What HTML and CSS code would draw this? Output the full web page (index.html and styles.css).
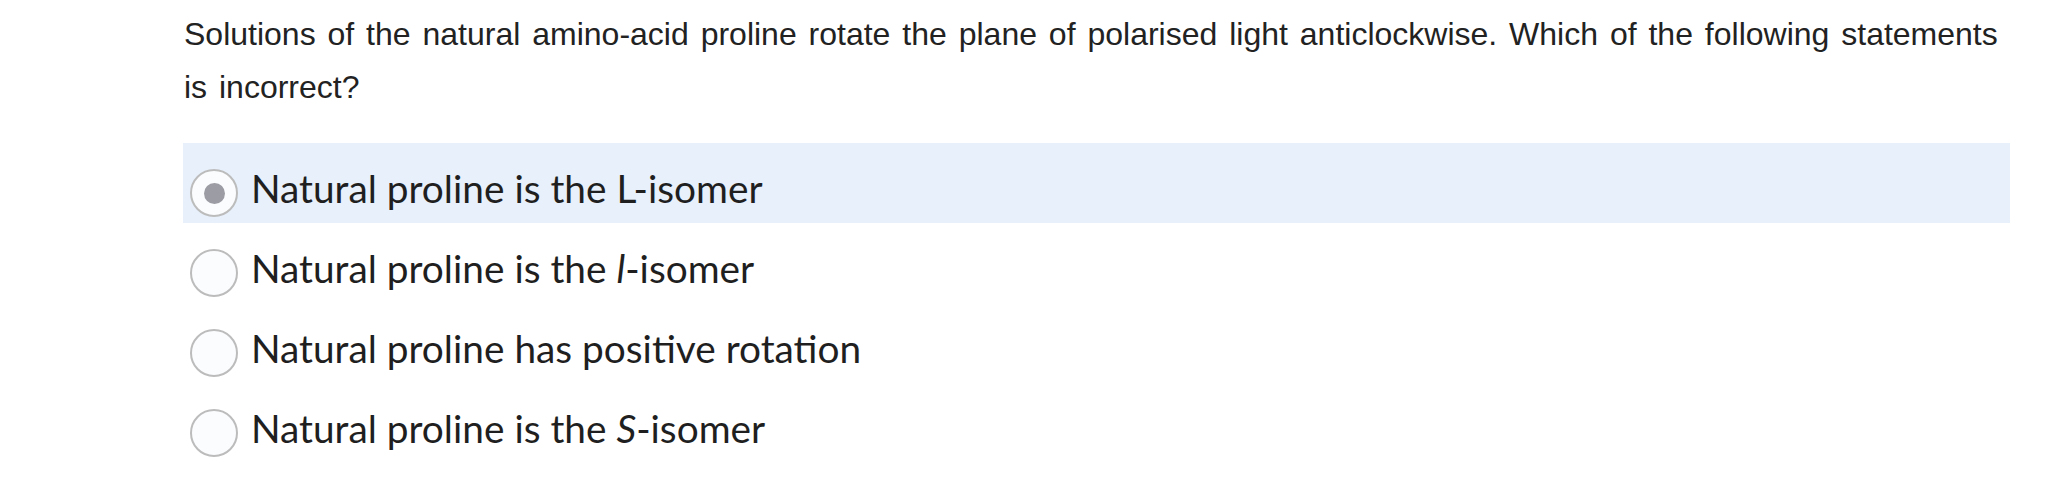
FILE: index.html
```html
<!DOCTYPE html>
<html lang="en">
<head>
<meta charset="utf-8">
<title>Question</title>
<link rel="stylesheet" href="styles.css">
</head>
<body>
<div class="question">
  <p class="stem">Solutions of the natural amino-acid proline rotate the plane of polarised light anticlockwise. Which of the following statements is incorrect?</p>
  <div class="options">
    <label class="option selected"><span class="radio"><span class="dot"></span></span><span class="text">Natural proline is the L-isomer</span></label>
    <label class="option"><span class="radio"></span><span class="text">Natural proline is the <i>l</i>-isomer</span></label>
    <label class="option"><span class="radio"></span><span class="text">Natural proline has positive rotation</span></label>
    <label class="option"><span class="radio"></span><span class="text">Natural proline is the <i>S</i>-isomer</span></label>
  </div>
</div>
</body>
</html>
```

FILE: styles.css
```css
html, body {
  margin: 0;
  padding: 0;
  background: #ffffff;
}

body {
  padding: 8px 53px 0 183px;
}

.question {
  width: 1827px;
}

.stem {
  margin: 0;
  font-family: "Liberation Sans", Arial, sans-serif;
  font-size: 32px;
  line-height: 53px;
  word-spacing: 3px;
  color: #222222;
  padding-left: 1px;
}

.options {
  margin-top: 29px;
  display: flex;
  flex-direction: column;
}

.option {
  display: flex;
  align-items: flex-start;
  height: 80px;
  box-sizing: border-box;
  padding: 22px 0 12px 7px;
  gap: 13px;
}

.option.selected {
  background: #e7f0fb;
}

.radio {
  flex: none;
  width: 48px;
  height: 48px;
  margin-top: 4px;
  box-sizing: border-box;
  border: 2px solid #bcbcbc;
  border-radius: 50%;
  background: #fbfcfe;
  display: flex;
  align-items: center;
  justify-content: center;
}

.dot {
  width: 21px;
  height: 21px;
  border-radius: 50%;
  background: #9b9ca4;
}

.text {
  font-family: Lato, "Open Sans", sans-serif;
  font-size: 38.8px;
  line-height: 46px;
  color: #1f1f1f;
}

.text i {
  font-style: italic;
}
```
